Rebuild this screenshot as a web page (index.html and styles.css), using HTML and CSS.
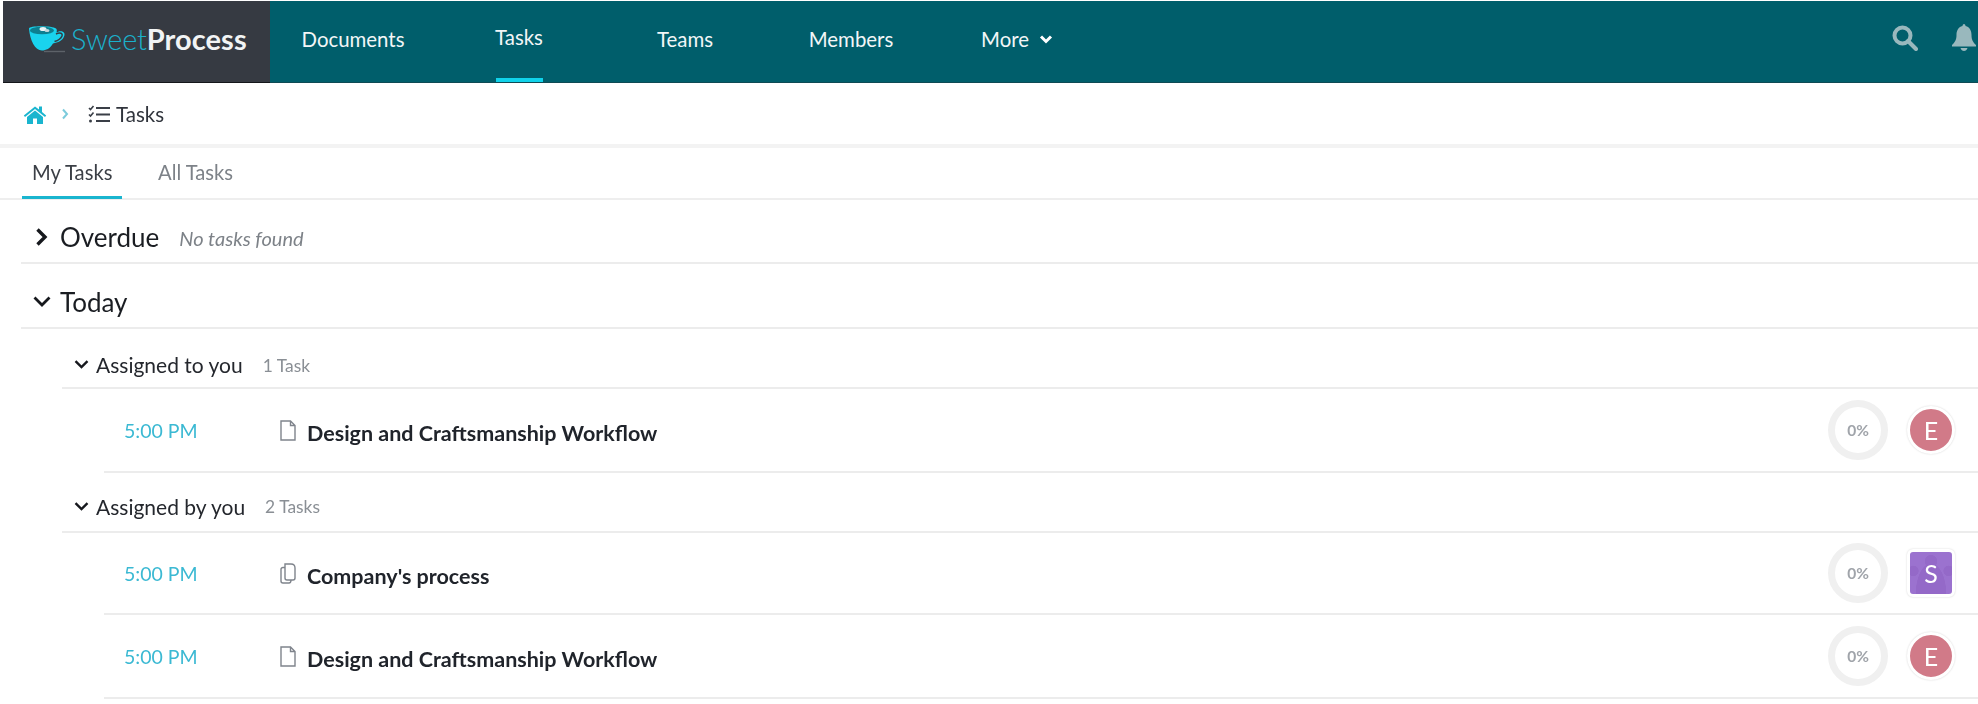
FILE: index.html
```html
<!DOCTYPE html>
<html lang="en">
<head>
<meta charset="utf-8">
<title>SweetProcess - Tasks</title>
<link rel="stylesheet" href="styles.css">
</head>
<body>
<div class="page">
  <header class="topbar">
    <a class="brand">
      <svg class="brand-cup" viewBox="0 0 38 28" width="38" height="29" aria-hidden="true">
        <path d="M1 4 C1 1 24 1 28 4 C29 5 29 6 28.500 8 C34 5 38 8 36 12 C34.500 16 30 18 25 19 C22 24 18 26 14 26 C7 26 2 16 1 4 Z" fill="#19d3ee"/>
        <path d="M28 9.500 C32 7.500 35 9 34 11.500 C33 14 30 16 26.500 17" fill="none" stroke="#363a42" stroke-width="1.500"/>
        <ellipse cx="14" cy="6" rx="12" ry="3.800" fill="#0d7f90"/>
        <ellipse cx="15" cy="4.500" rx="3.500" ry="2" fill="#e8f4f6"/>
        <ellipse cx="19" cy="6" rx="2.500" ry="1.600" fill="#c5d8dc"/>
        <path d="M16 27 H37" stroke="#5d6269" stroke-width="1.400"/>
      </svg>
      <span class="brand-name"><span class="brand-sweet">Sweet</span><span class="brand-process">Process</span></span>
    </a>
    <nav class="mainnav">
      <a class="navitem"><span class="navlabel">Documents</span></a>
      <a class="navitem is-active"><span class="navlabel">Tasks</span></a>
      <a class="navitem"><span class="navlabel">Teams</span></a>
      <a class="navitem"><span class="navlabel">Members</span></a>
      <a class="navitem"><span class="navlabel">More</span>
        <svg class="nav-chevron" viewBox="0 0 14 10" width="14" height="10" aria-hidden="true"><path d="M2 2.500 L7 7.500 L12 2.500" fill="none" stroke="#fff" stroke-width="3"/></svg>
      </a>
    </nav>
    <div class="tools">
      <svg viewBox="0 0 26 26" width="26" height="26" aria-hidden="true"><circle cx="10.500" cy="10.500" r="8" fill="none" stroke="#99b8bd" stroke-width="4"/><path d="M16 16 L24 24" stroke="#99b8bd" stroke-width="4" stroke-linecap="round"/></svg>
      <svg viewBox="0 0 24 27" width="24" height="27" aria-hidden="true"><path d="M12 0 C13 0 13.500 1 13.500 2 C18 3 19.500 7 19.500 11 C19.500 16 21 18 24 21 V22.500 H0 V21 C3 18 4.500 16 4.500 11 C4.500 7 6 3 10.500 2 C10.500 1 11 0 12 0 Z M8.500 24 H15.500 C15 26 13.500 27 12 27 C10.500 27 9 26 8.500 24 Z" fill="#99b8bd"/></svg>
    </div>
  </header>

  <div class="crumbs">
    <svg class="crumb-home" viewBox="0 0 24 20" width="24" height="20" aria-hidden="true"><path d="M12 2.500 L0.800 11.500 L2 13 L12 5 L22 13 L23.200 11.500 L19 8 V2.500 H16 V5.500 L12 2.500 Z M12 6.500 L4 13 V20 H10 V14.500 H14 V20 H20 V13 Z" fill="#1ab5cf"/></svg>
    <svg class="crumb-sep" viewBox="0 0 8 12" width="8" height="12" aria-hidden="true"><path d="M2 1.500 L6 6 L2 10.500" fill="none" stroke="#7ccbdc" stroke-width="2"/></svg>
    <svg class="crumb-list" viewBox="0 0 22 18" width="22" height="18" aria-hidden="true"><path d="M1 3 L2.500 4.500 L5.500 1 M1 9.500 L2.500 11 L5.500 7.500" fill="none" stroke="#3a3f47" stroke-width="1.600"/><circle cx="2.500" cy="16" r="1.500" fill="#3a3f47"/><path d="M8 3 H22 M8 9.500 H22 M8 16 H22" stroke="#3a3f47" stroke-width="2.200"/></svg>
    <span class="crumb-label">Tasks</span>
  </div>

  <div class="tabs">
    <a class="tab is-current">My Tasks</a>
    <a class="tab">All Tasks</a>
  </div>

  <section class="group group-overdue">
    <svg class="chev-right" viewBox="0 0 13 18" width="13" height="18" aria-hidden="true"><path d="M2.500 1.500 L10 9 L2.500 16.500" fill="none" stroke="#16181d" stroke-width="3.400"/></svg>
    <h2 class="group-title">Overdue</h2>
    <span class="group-note">No tasks found</span>
  </section>

  <section class="group group-today">
    <svg class="chev-down" viewBox="0 0 18 11" width="18" height="11" aria-hidden="true"><path d="M1.500 1.500 L9 9 L16.500 1.500" fill="none" stroke="#16181d" stroke-width="2.800"/></svg>
    <h2 class="group-title">Today</h2>
  </section>

  <div class="subhead subhead-to">
    <svg class="chev-sub" viewBox="0 0 15 9" width="15" height="9" aria-hidden="true"><path d="M1.500 1.200 L7.500 7 L13.500 1.200" fill="none" stroke="#16181d" stroke-width="2.400"/></svg>
    <h3 class="subhead-title">Assigned to you</h3>
    <span class="subhead-count">1 Task</span>
  </div>

  <div class="task task-a">
    <span class="task-time">5:00 PM</span>
    <svg class="task-icon" viewBox="0 0 16 21" width="16" height="21" aria-hidden="true"><path d="M1 1 H10.500 L15 5.500 V20 H1 Z M10.500 1 V5.500 H15" fill="none" stroke="#7f848c" stroke-width="1.400"/></svg>
    <span class="task-title">Design and Craftsmanship Workflow</span>
    <span class="ring">0%</span>
    <span class="avatar avatar-round">E</span>
  </div>

  <div class="subhead subhead-by">
    <svg class="chev-sub" viewBox="0 0 15 9" width="15" height="9" aria-hidden="true"><path d="M1.500 1.200 L7.500 7 L13.500 1.200" fill="none" stroke="#16181d" stroke-width="2.400"/></svg>
    <h3 class="subhead-title">Assigned by you</h3>
    <span class="subhead-count">2 Tasks</span>
  </div>

  <div class="task task-b">
    <span class="task-time">5:00 PM</span>
    <svg class="task-icon" viewBox="0 0 16 21" width="16" height="21" aria-hidden="true"><path d="M5 1 H11 C13.500 1 15 2.500 15 5 V15 C15 16.500 14 17 13 17 H7 C5.500 17 5 16 5 15 Z" fill="none" stroke="#7f848c" stroke-width="1.400"/><path d="M5 4.500 H3 C1.800 4.500 1 5.300 1 6.500 V18 C1 19.300 1.800 20 3 20 H9 C10.500 20 11 19 11 17" fill="none" stroke="#7f848c" stroke-width="1.400"/></svg>
    <span class="task-title">Company's process</span>
    <span class="ring">0%</span>
    <span class="avatar avatar-team">S</span>
  </div>

  <div class="task task-c">
    <span class="task-time">5:00 PM</span>
    <svg class="task-icon" viewBox="0 0 16 21" width="16" height="21" aria-hidden="true"><path d="M1 1 H10.500 L15 5.500 V20 H1 Z M10.500 1 V5.500 H15" fill="none" stroke="#7f848c" stroke-width="1.400"/></svg>
    <span class="task-title">Design and Craftsmanship Workflow</span>
    <span class="ring">0%</span>
    <span class="avatar avatar-round">E</span>
  </div>
</div>
</body>
</html>
```
FILE: styles.css
```css
* { box-sizing: border-box; }
html, body { margin: 0; padding: 0; background: #fff; }
body { font-family: Lato, "Open Sans", "Liberation Sans", sans-serif; color: #2b2f36; overflow: hidden; }
.page { width: 1978px; height: 704px; padding-top: 1px; overflow: hidden; filter: blur(0.35px); }
h2, h3 { margin: 0; font-weight: 400; }
svg { display: block; flex: none; }

.topbar { display: flex; height: 82px; margin-left: 3px; background: #005e6b; border-bottom: 1px solid #0f4a54; }
.brand { display: flex; align-items: center; width: 267px; height: 82px; padding: 0 0 6px 25px; gap: 5px; background: #363a42; border-bottom: 1px solid #14161a; }
.brand-name { font-size: 29px; line-height: 36px; letter-spacing: -0.3px; }
.brand-sweet { color: #1bb0cb; font-weight: 300; }
.brand-process { color: #f2f4f5; font-weight: 700; letter-spacing: 0.1px; }

.mainnav { display: grid; grid-template-columns: repeat(5, 166px); }
.navitem { position: relative; display: flex; align-items: center; justify-content: center; gap: 10px; height: 81px; padding-bottom: 5px; color: #f2f6f7; font-size: 20.400px; }
.navitem.is-active { padding-bottom: 9px; }
.navitem.is-active::after { content: ""; position: absolute; left: 60px; width: 47px; bottom: 0; height: 4px; background: #10d2ea; }
.tools { display: flex; align-items: center; gap: 34px; margin-left: auto; padding: 0 2px 8px 0; }

.crumbs { display: flex; align-items: center; height: 65px; padding: 1px 0 0 23px; border-bottom: 4px solid #f3f3f3; }
.crumb-sep { margin-left: 14px; }
.crumb-list { margin-left: 19px; }
.crumb-label { margin-left: 6px; font-size: 20.500px; color: #30343c; }

.tabs { display: flex; height: 52px; padding-left: 22px; gap: 26px; border-bottom: 2px solid #eeeeee; }
.tab { display: flex; align-items: center; height: 50px; padding: 0 10px 2px; font-size: 20.200px; color: #7d8288; }
.tab.is-current { width: 100px; color: #3b3f46; border-bottom: 3px solid #1ab5cf; height: 51px; padding-bottom: 0; white-space: nowrap; }

.group { display: flex; align-items: center; margin-left: 21px; border-bottom: 2px solid #ececec; }
.group-overdue { height: 64px; padding: 12px 0 0 14px; }
.group-today { height: 65px; padding: 12px 0 0 12px; }
.group-title { font-size: 26px; color: #1a1d22; }
.group-overdue .group-title { margin-left: 12px; }
.group-today .group-title { margin-left: 9px; }
.group-note { margin-left: 20px; padding-top: 2px; font-size: 20px; font-style: italic; color: #7d8288; }

.subhead { display: flex; align-items: center; margin-left: 62px; padding-left: 12px; border-bottom: 2px solid #ececec; }
.subhead-to { height: 60px; padding-top: 13px; }
.subhead-by { height: 60px; padding-top: 8px; }
.subhead-title { margin-left: 7px; font-size: 21px; color: #24272d; }
.subhead-count { margin-left: 20px; padding-top: 1px; font-size: 17.400px; color: #8a8f95; }

.task { display: flex; align-items: center; margin-left: 104px; padding: 0 23px 0 20px; border-bottom: 2px solid #ececec; }
.task-a { height: 84px; }
.task-b { height: 82px; }
.task-c { height: 84px; }
.task-time { width: 156px; padding-top: 1px; font-size: 19.500px; color: #3bb9d3; }
.task-title { margin-left: 11px; padding-top: 6px; font-size: 21.500px; font-weight: 700; color: #20242b; }
.task-icon { margin-top: 1px; }
.ring { display: flex; align-items: center; justify-content: center; width: 60px; height: 60px; margin-left: auto; border: 7px solid #f0f0f0; border-radius: 50%; font-size: 15.500px; font-weight: 700; color: #a0a4aa; }
.avatar { display: flex; align-items: center; justify-content: center; width: 48px; height: 48px; margin-left: 19px; border: 3.500px solid #fff; box-shadow: 0 0 2px #d4d4d4; font-size: 25px; color: #fff; }
.avatar-round { border-radius: 50%; background: #d17a88; }
.avatar-team { border-radius: 6px; background-color: #9b72cf; background-image: radial-gradient(circle at 50% 22%, #9469c8 0 6px, transparent 6.500px), radial-gradient(circle at 8% 45%, #9469c8 0 5px, transparent 5.500px), radial-gradient(circle at 92% 45%, #9469c8 0 5px, transparent 5.500px), radial-gradient(ellipse at 50% 100%, #9469c8 0 15px, transparent 15.500px); }
```
